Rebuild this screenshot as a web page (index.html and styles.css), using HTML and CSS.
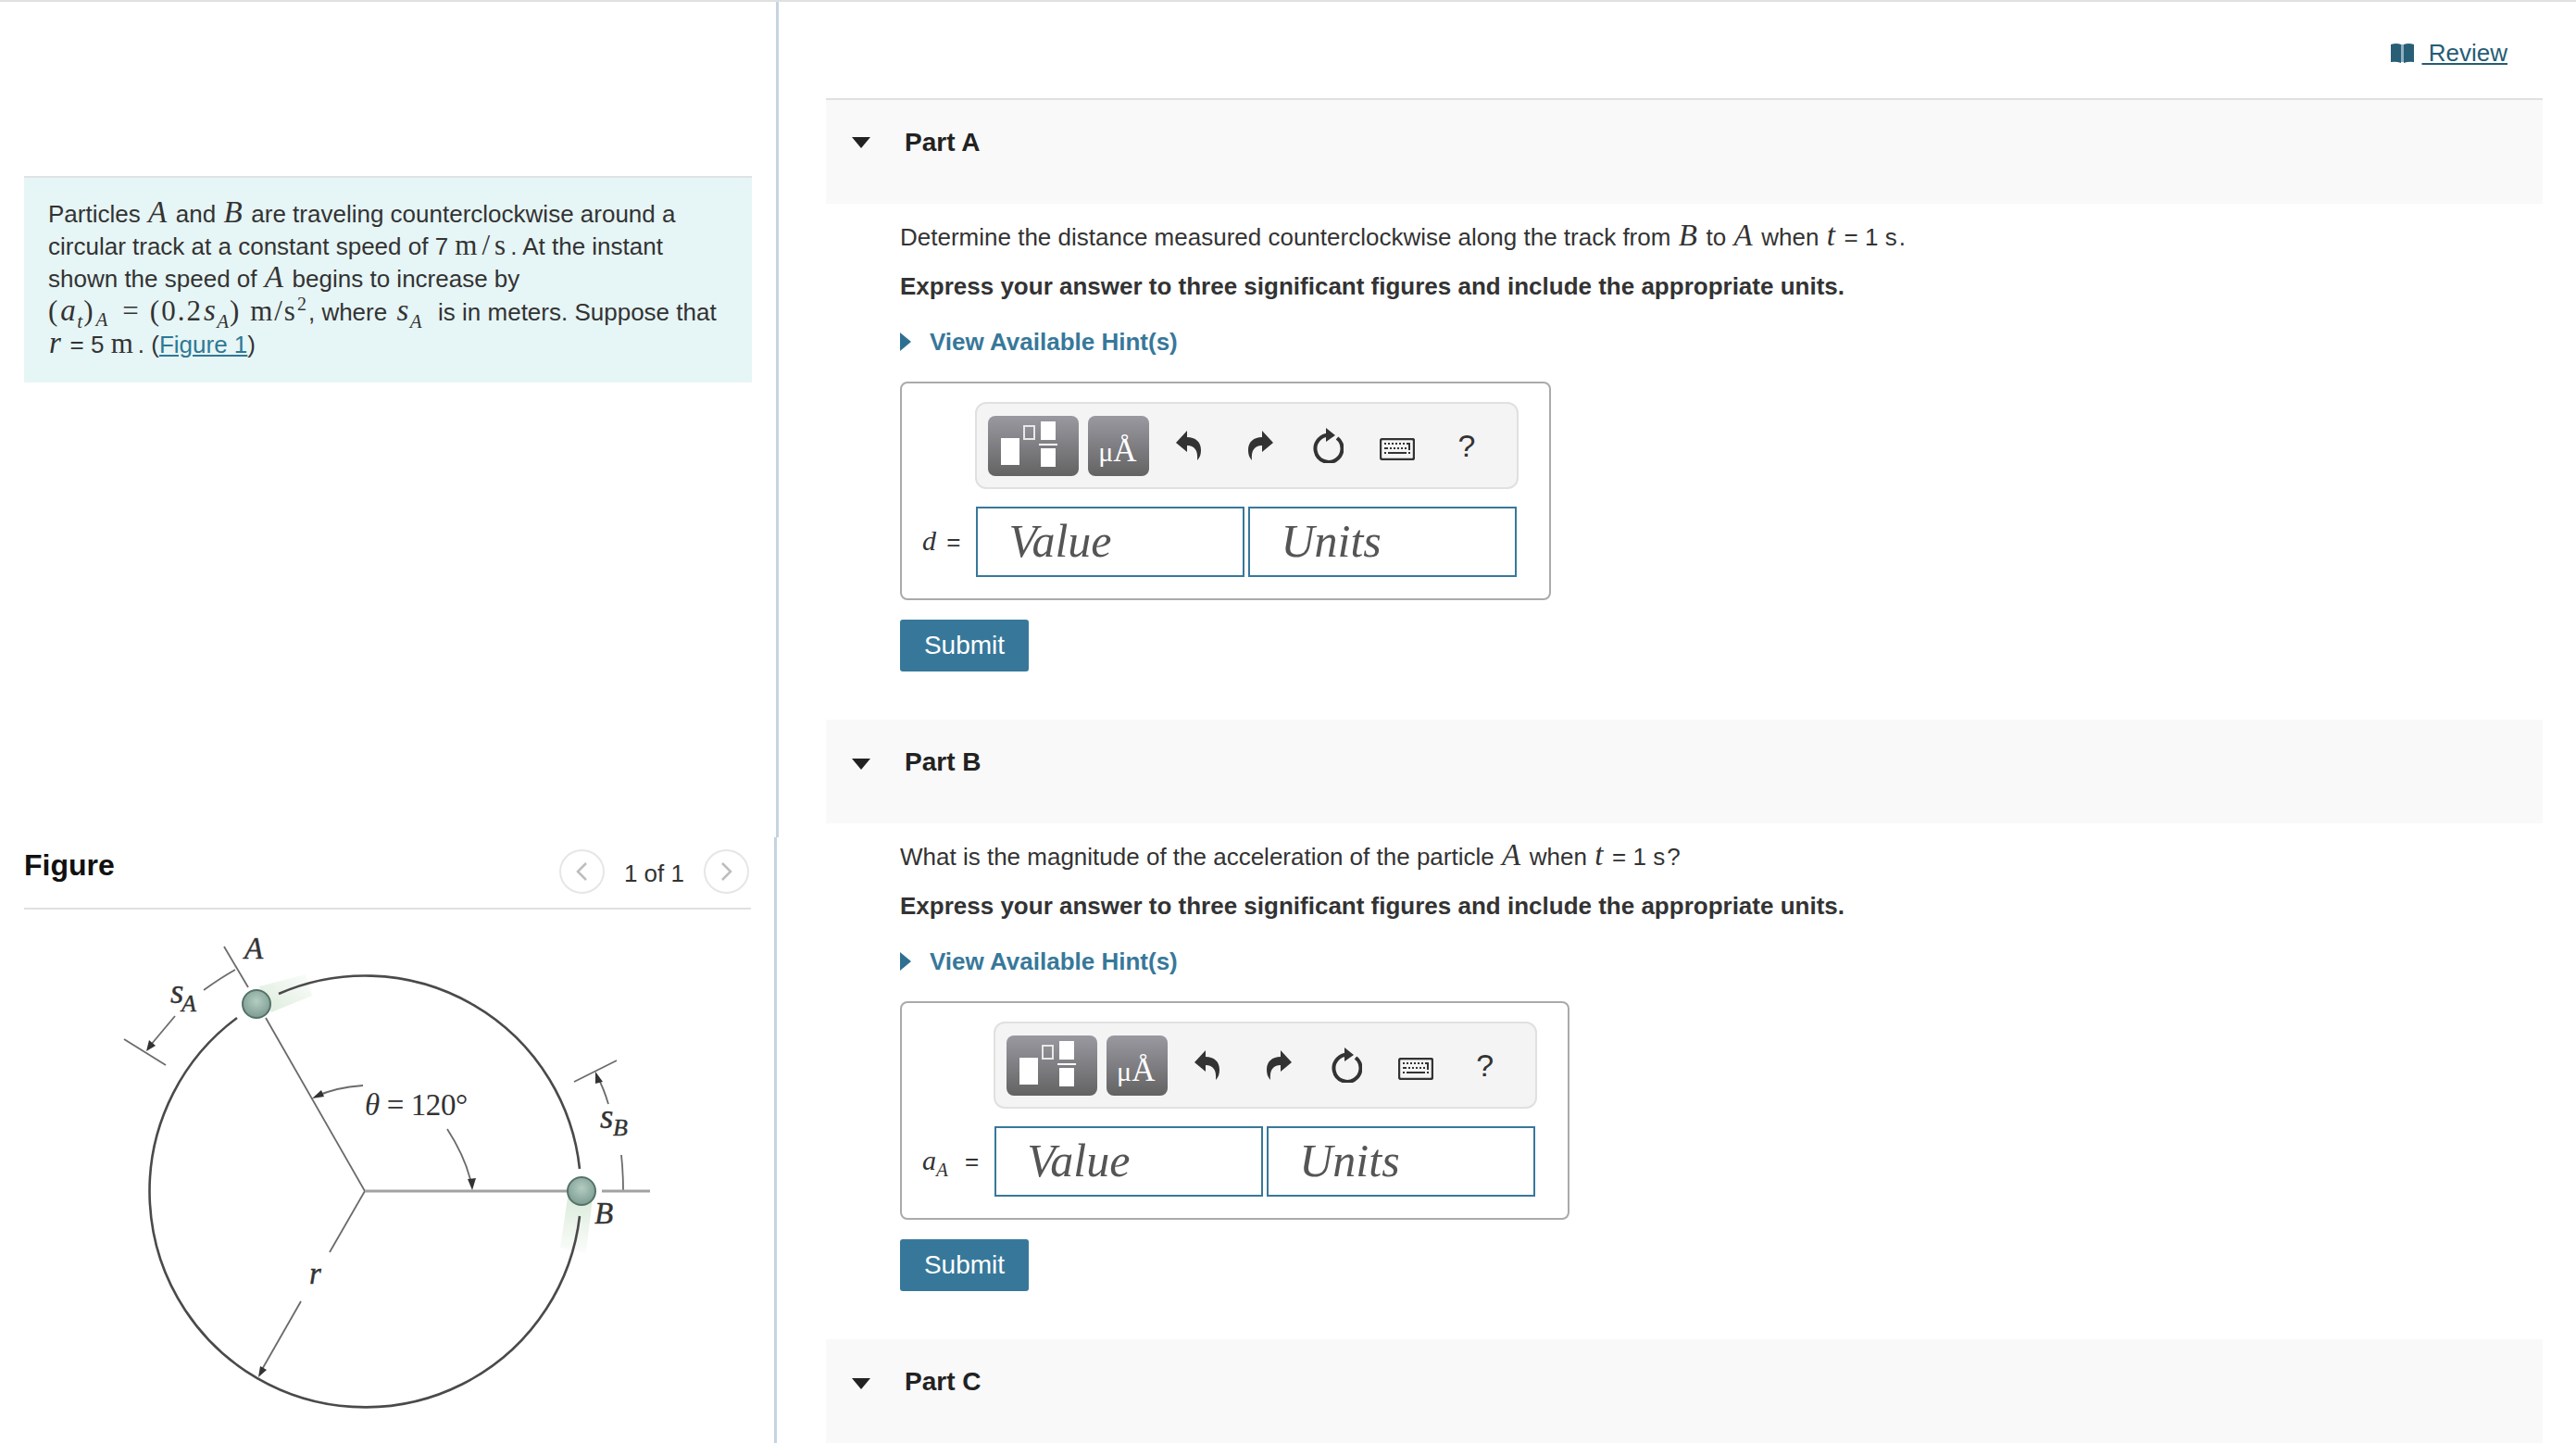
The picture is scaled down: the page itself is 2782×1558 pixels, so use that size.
FILE: index.html
```html
<!DOCTYPE html>
<html lang="en">
<head>
    <meta charset="UTF-8">
    <title>Particles A and B</title>
    <link rel="stylesheet" href="styles.css">
</head>
<body>
    <div class="app">
        <!-- Left column: problem text and figure -->
        <div class="left">
            <div class="intro-pane">
                <div class="intro">
                    Particles <span class="m">A</span> and <span class="m">B</span> are traveling counterclockwise around a<br>
                    circular track at a constant speed of 7 <span class="u loose">m/s</span>. At the instant<br>
                    shown the speed of <span class="m">A</span> begins to increase by<br>
                    <span class="u">(</span><span class="m">a<sub>t</sub></span><span class="u">)</span><sub class="m">A</sub><span class="u eq">=</span><span class="u">(0.2</span><span class="m">s<sub>A</sub></span><span class="u">) m/s<sup>2</sup></span>, where <span class="m far">s<sub>A</sub></span>&nbsp; is in meters. Suppose that<br>
                    <span class="m">r</span> = 5 <span class="u loose">m</span>. (<a href="#">Figure 1</a>)
                </div>
            </div>
            <div class="figure-pane">
                <div class="figure-head">
                    <h2>Figure</h2>
                    <div class="pager">
                        <span class="round"><svg width="14" height="22" viewBox="0 0 14 22"><path d="M12 2 L3 11 L12 20"/></svg></span>
                        <span class="count">1 of 1</span>
                        <span class="round"><svg width="14" height="22" viewBox="0 0 14 22"><path d="M2 2 L11 11 L2 20"/></svg></span>
                    </div>
                </div>
                <svg class="diagram" width="800" height="576" viewBox="0 982 800 576">
                    <defs>
                        <linearGradient id="glowA" x1="0" y1="1" x2="1" y2="0">
                            <stop offset="0" stop-color="#dcebdb"/>
                            <stop offset="1" stop-color="#fbfdfb"/>
                        </linearGradient>
                        <linearGradient id="glowB" x1="0" y1="0" x2="0" y2="1">
                            <stop offset="0" stop-color="#dcebdb"/>
                            <stop offset="1" stop-color="#fbfdfb"/>
                        </linearGradient>
                        <radialGradient id="ball" cx="0.5" cy="0.4" r="0.6">
                            <stop offset="0" stop-color="#b4ccc2"/>
                            <stop offset="1" stop-color="#7c9d92"/>
                        </radialGradient>
                    </defs>
                    <polygon fill="url(#glowA)" points="280,1065 330,1052 337,1075 293,1093"/>
                    <polygon fill="url(#glowB)" points="613,1293 640,1293 633,1353 605,1347"/>

                    <g class="track">
                        <path d="M301 1073 A233 233 0 0 1 626 1262"/>
                        <path d="M626 1313 A233 233 0 1 1 256 1099"/>
                    </g>

                    <g class="thin">
                        <path d="M287 1099 L394 1286 L356 1352"/>
                        <path d="M325 1405 L281 1482"/>
                        <path d="M242 1022 L268 1066"/>
                        <path d="M220 1069 Q238 1056 254 1047"/>
                        <path d="M189 1097 L163 1128"/>
                        <path d="M134 1122 L179 1150"/>
                        <path d="M620 1168 L666 1145"/>
                        <path d="M657 1192 Q652 1175 645 1162"/>
                        <path d="M671 1247 Q673 1265 673 1286"/>
                        <path d="M392 1172 Q362 1174 341 1184"/>
                        <path d="M483 1219 Q503 1250 509 1278"/>
                    </g>
                    <path class="axis" d="M394 1286 H613 M650 1286 H702"/>

                    <g class="heads">
                        <polygon points="279,1487 281,1475 288,1479"/>
                        <polygon points="158,1135 161,1123 168,1129"/>
                        <polygon points="643,1157 651,1168 643,1170"/>
                        <polygon points="337,1186 347,1177 350,1184"/>
                        <polygon points="510,1285 505,1273 514,1272"/>
                    </g>

                    <circle class="bead" cx="277" cy="1084" r="15"/>
                    <circle class="bead" cx="628" cy="1286" r="15"/>

                    <text class="lbl big" x="264" y="1035">A</text>
                    <text class="lbl s" x="184" y="1083">s</text>
                    <text class="lbl sm" x="196" y="1092">A</text>
                    <text class="lbl s" x="648" y="1218">s</text>
                    <text class="lbl sm" x="662" y="1226">B</text>
                    <text class="lbl big" x="642" y="1321">B</text>
                    <text class="lbl big" x="334" y="1386">r</text>
                    <text class="theta" x="394" y="1204"><tspan class="it">θ</tspan> = 120°</text>
                </svg>
            </div>
        </div>

        <!-- Right column: the parts -->
        <div class="right">
            <div class="review">
                <svg class="book" width="25" height="21" viewBox="0 0 25 21"><rect class="gutter" x="11" y="1" width="3" height="19"/><path d="M0 1 Q6 -1 11 1 V21 Q6 19 0 20 Z M14 1 Q19 -1 25 1 V20 Q19 19 14 21 Z"/></svg>
                <a href="#">&nbsp;Review</a>
            </div>

            <div class="part first">
                <div class="part-head"><span class="caret"></span><h3>Part A</h3></div>
                <div class="part-body">
                    <p class="prompt">Determine the distance measured counterclockwise along the track from <span class="m">B</span> to <span class="m">A</span> when <span class="m">t</span> = 1 <span class="sp">s.</span></p>
                    <p class="prompt strong">Express your answer to three significant figures and include the appropriate units.</p>
                    <div class="hint"><span class="hint-caret"></span>View Available Hint(s)</div>
                    <div class="answer">
                        <div class="toolbar">
                            <div class="tool wide">
                                <svg width="98" height="65" viewBox="0 0 98 65"><path class="solid" d="M14 24h20v29h-20z M57 6h16v20h-16z M55 30h20v2h-20z M57 35h16v20h-16z"/><rect class="hollow" x="39" y="11" width="11" height="14"/></svg>
                            </div>
                            <div class="tool units"><span class="mu">μ</span><span class="ang">Å</span></div>
                            <span class="slot first-slot"><svg width="27" height="32" viewBox="0 0 27 32"><path d="M12 0 L0 13 L12 23 V16 C20 16 24 21 23 32 C26 29 27 25 27 21 C27 12 21 7 12 7 Z"/></svg></span>
                            <span class="slot"><svg class="redo" width="27" height="32" viewBox="0 0 27 32"><path d="M15 0 L27 13 L15 23 V16 C7 16 3 21 4 32 C1 29 0 25 0 21 C0 12 6 7 15 7 Z"/></svg></span>
                            <span class="slot"><svg width="34" height="38" viewBox="0 0 34 38"><path class="ring" d="M20 8 A14.5 14.5 0 1 0 27 11"/><path d="M15 0 L25 8 L15 15 Z"/></svg></span>
                            <span class="slot"><svg class="keys" width="38" height="24" viewBox="0 0 38 24"><rect class="frame" x="1" y="1" width="36" height="22" rx="2"/><path d="M5 5h2v2h-2z M9 5h2v2h-2z M13 5h2v2h-2z M17 5h2v2h-2z M21 5h2v2h-2z M25 5h2v2h-2z M29 5h4v8h-2v-6h-2z M5 10h4v2h-4z M11 10h2v2h-2z M15 10h2v2h-2z M19 10h2v2h-2z M23 10h2v2h-2z M27 10h2v2h-2z M5 15h2v2h-2z M9 15h20v2h-20z M31 15h2v2h-2z"/></svg></span>
                            <span class="slot help">?</span>
                        </div>
                        <div class="answer-label"><span class="m">d</span> =</div>
                        <div class="fields">
                            <div class="field">Value</div>
                            <div class="field">Units</div>
                        </div>
                    </div>
                    <button class="submit">Submit</button>
                </div>
            </div>

            <div class="part">
                <div class="part-head"><span class="caret"></span><h3>Part B</h3></div>
                <div class="part-body">
                    <p class="prompt">What is the magnitude of the acceleration of the particle <span class="m">A</span> when <span class="m">t</span> = 1 <span class="sp">s</span>?</p>
                    <p class="prompt strong">Express your answer to three significant figures and include the appropriate units.</p>
                    <div class="hint"><span class="hint-caret"></span>View Available Hint(s)</div>
                    <div class="answer">
                        <div class="toolbar">
                            <div class="tool wide">
                                <svg width="98" height="65" viewBox="0 0 98 65"><path class="solid" d="M14 24h20v29h-20z M57 6h16v20h-16z M55 30h20v2h-20z M57 35h16v20h-16z"/><rect class="hollow" x="39" y="11" width="11" height="14"/></svg>
                            </div>
                            <div class="tool units"><span class="mu">μ</span><span class="ang">Å</span></div>
                            <span class="slot first-slot"><svg width="27" height="32" viewBox="0 0 27 32"><path d="M12 0 L0 13 L12 23 V16 C20 16 24 21 23 32 C26 29 27 25 27 21 C27 12 21 7 12 7 Z"/></svg></span>
                            <span class="slot"><svg class="redo" width="27" height="32" viewBox="0 0 27 32"><path d="M15 0 L27 13 L15 23 V16 C7 16 3 21 4 32 C1 29 0 25 0 21 C0 12 6 7 15 7 Z"/></svg></span>
                            <span class="slot"><svg width="34" height="38" viewBox="0 0 34 38"><path class="ring" d="M20 8 A14.5 14.5 0 1 0 27 11"/><path d="M15 0 L25 8 L15 15 Z"/></svg></span>
                            <span class="slot"><svg class="keys" width="38" height="24" viewBox="0 0 38 24"><rect class="frame" x="1" y="1" width="36" height="22" rx="2"/><path d="M5 5h2v2h-2z M9 5h2v2h-2z M13 5h2v2h-2z M17 5h2v2h-2z M21 5h2v2h-2z M25 5h2v2h-2z M29 5h4v8h-2v-6h-2z M5 10h4v2h-4z M11 10h2v2h-2z M15 10h2v2h-2z M19 10h2v2h-2z M23 10h2v2h-2z M27 10h2v2h-2z M5 15h2v2h-2z M9 15h20v2h-20z M31 15h2v2h-2z"/></svg></span>
                            <span class="slot help">?</span>
                        </div>
                        <div class="answer-label"><span class="m">a<sub>A</sub></span> =</div>
                        <div class="fields">
                            <div class="field">Value</div>
                            <div class="field">Units</div>
                        </div>
                    </div>
                    <button class="submit">Submit</button>
                </div>
            </div>

            <div class="part">
                <div class="part-head"><span class="caret"></span><h3>Part C</h3></div>
            </div>
        </div>
    </div>
</body>
</html>
```

FILE: styles.css
```css
/* General Styling */
html, body {
    height: 100%;
}

body {
    margin: 0;
    background-color: #fff;
    color: #333;
    font-family: "Liberation Sans", Arial, sans-serif;
    font-size: 26px;
    overflow: hidden;
}

.app {
    display: flex;
    height: 1558px;
    border-top: 2px solid #e0e0e0;
    box-sizing: border-box;
    overflow: hidden;
}

/* Math text */
.m {
    font-family: "Liberation Serif", serif;
    font-style: italic;
    font-size: 33px;
    line-height: 1;
    letter-spacing: 1.5px;
    margin: 0 1px;
}

.m sub, sub.m {
    font-size: 21px;
    line-height: 0;
    letter-spacing: 0;
}

.u {
    font-family: "Liberation Serif", serif;
    font-size: 31px;
    line-height: 1;
    letter-spacing: 2px;
}

.u.loose {
    letter-spacing: 5px;
}

.u sup {
    font-size: 20px;
    line-height: 0;
}

.eq {
    margin: 0 10px 0 15px;
}

.far {
    margin: 0 3px;
}

.sp {
    letter-spacing: 2px;
}

/* Left column */
.left {
    width: 841px;
    flex-shrink: 0;
}

.intro-pane {
    height: 902px;
    padding: 188px 0 0 26px;
    box-sizing: border-box;
    border-right: 3px solid #c6d4e1;
}

.intro {
    width: 786px;
    height: 223px;
    box-sizing: border-box;
    padding: 21px 0 0 26px;
    background-color: #e6f5f5;
    border-top: 2px solid #dfe3e3;
    line-height: 34.6px;
    white-space: nowrap;
}

.intro a {
    color: #2f7896;
}

.figure-pane {
    width: 839px;
    height: 654px;
    box-sizing: border-box;
    border-right: 3px solid #c6d4e1;
}

.figure-head {
    display: flex;
    justify-content: space-between;
    align-items: center;
    margin-left: 26px;
    width: 785px;
    height: 78px;
    box-sizing: border-box;
    border-bottom: 2px solid #e0e0e0;
}

.figure-head h2 {
    margin: 0 0 16px;
    font-size: 32px;
    color: #111;
}

.pager {
    display: flex;
    align-items: center;
    margin-bottom: 2px;
    margin-right: 2px;
}

.round {
    display: flex;
    align-items: center;
    justify-content: center;
    width: 49px;
    height: 48px;
    box-sizing: border-box;
    border: 2px solid #e6e6e6;
    border-radius: 50%;
}

.round path {
    fill: none;
    stroke: #bdbdbd;
    stroke-width: 2.5;
}

.count {
    margin: 4px 21px 0;
    font-size: 26px;
}

.diagram {
    display: block;
}

.track path {
    fill: none;
    stroke: #4a4a4a;
    stroke-width: 2.6;
}

.thin path {
    fill: none;
    stroke: #6b6b6b;
    stroke-width: 1.8;
}

.axis {
    fill: none;
    stroke: #a2a2a2;
    stroke-width: 2.8;
}

.heads polygon {
    fill: #333;
}

.bead {
    fill: url(#ball);
    stroke: #557267;
    stroke-width: 2;
}

.lbl {
    font-family: "Liberation Serif", serif;
    font-style: italic;
    fill: #333;
    stroke: #333;
    stroke-width: 0.4;
}

.lbl.big {
    font-size: 33px;
}

.lbl.s {
    font-size: 37px;
}

.lbl.sm {
    font-size: 26px;
}

.theta {
    font-family: "Liberation Serif", serif;
    font-size: 33px;
    letter-spacing: -0.4px;
    fill: #333;
}

.theta .it {
    font-style: italic;
}

/* Right column */
.right {
    flex: 1;
    padding: 0 36px 0 51px;
    min-width: 0;
}

.review {
    display: flex;
    justify-content: flex-end;
    align-items: center;
    height: 104px;
    padding: 6px 38px 0 0;
    box-sizing: border-box;
}

.book {
    margin-right: 9px;
}

.book path {
    fill: #285f77;
}

.book .gutter {
    fill: #8fb0bf;
}

.review a {
    color: #255c75;
}

.part {
    padding-bottom: 52px;
}

.part-head {
    display: flex;
    align-items: flex-start;
    height: 112px;
    background-color: #f9f9f9;
}

.part.first .part-head {
    border-top: 2px solid #e0e0e0;
}

.caret {
    width: 0;
    height: 0;
    margin: 40px 36px 0 28px;
    border-left: 10px solid transparent;
    border-right: 10px solid transparent;
    border-top: 12px solid #222;
}

.part-head h3 {
    margin: 30px 0 0 1px;
    font-size: 28px;
    line-height: 32px;
    color: #222;
}

.part:not(.first) .caret {
    margin-top: 42px;
}

.part:not(.first) h3 {
    margin-top: 30px;
}

.part-body {
    padding: 18px 0 0 80px;
}

.prompt {
    margin: 0 0 17px;
    line-height: 36px;
    white-space: nowrap;
}

.strong {
    font-weight: bold;
    margin-bottom: 24px;
}

.hint {
    display: flex;
    align-items: center;
    height: 36px;
    margin-bottom: 25px;
    color: #37789a;
    font-weight: bold;
}

.hint-caret {
    width: 0;
    height: 0;
    margin-right: 20px;
    border-top: 10px solid transparent;
    border-bottom: 10px solid transparent;
    border-left: 12px solid #2f7092;
}

.answer {
    display: inline-grid;
    grid-template-columns: auto 586px;
    align-items: center;
    row-gap: 19px;
    padding: 20px 33px 23px 21px;
    border: 2px solid #aaa;
    border-radius: 8px;
    vertical-align: top;
}

.toolbar {
    grid-column: 2;
    display: flex;
    align-items: center;
    height: 94px;
    box-sizing: border-box;
    padding-left: 12px;
    margin-left: -1px;
    background-color: #f4f4f4;
    border: 2px solid #e0e0e0;
    border-radius: 12px;
}

.tool {
    display: flex;
    height: 65px;
    border-radius: 8px;
    background: linear-gradient(#9a99a1, #636363);
    color: #fff;
}

.tool.wide {
    width: 98px;
}

.solid {
    fill: #fff;
}

.hollow {
    fill: none;
    stroke: #e8e8e8;
    stroke-width: 2;
}

.tool.units {
    width: 66px;
    box-sizing: border-box;
    padding-right: 3px;
    margin-left: 10px;
    font-family: "Liberation Serif", serif;
    align-items: baseline;
    justify-content: center;
    line-height: 76px;
}

.mu {
    font-size: 30px;
}

.ang {
    font-size: 35px;
}

.slot {
    display: flex;
    align-items: center;
    justify-content: center;
    width: 75px;
    height: 50px;
    color: #333;
}

.first-slot {
    margin-left: 5px;
}

.slot path {
    fill: #333;
}

.slot .ring {
    fill: none;
    stroke: #333;
    stroke-width: 4;
}

.redo {
    margin-left: 6px;
}

.keys {
    margin-top: 8px;
}

.keys .frame {
    fill: none;
    stroke: #333;
    stroke-width: 2.4;
}

.help {
    font-size: 34px;
}

.answer-label {
    grid-row: 2;
    margin-right: 17px;
    white-space: nowrap;
}

.answer-label .m {
    font-size: 30px;
    letter-spacing: 0;
    margin-right: 4px;
}

.answer-label sub {
    margin-right: 7px;
}

.fields {
    grid-row: 2;
    grid-column: 2;
    display: flex;
    gap: 4px;
}

.field {
    width: 290px;
    height: 76px;
    box-sizing: border-box;
    padding-left: 33px;
    border: 2px solid #37789a;
    font-family: "Liberation Serif", serif;
    font-style: italic;
    font-size: 50px;
    line-height: 70px;
    color: #555;
}

.submit {
    display: block;
    width: 139px;
    height: 56px;
    margin-top: 21px;
    border: none;
    border-radius: 3px;
    background-color: #37789a;
    color: #fff;
    font-family: "Liberation Sans", Arial, sans-serif;
    font-size: 28px;
    padding: 0;
}
```
